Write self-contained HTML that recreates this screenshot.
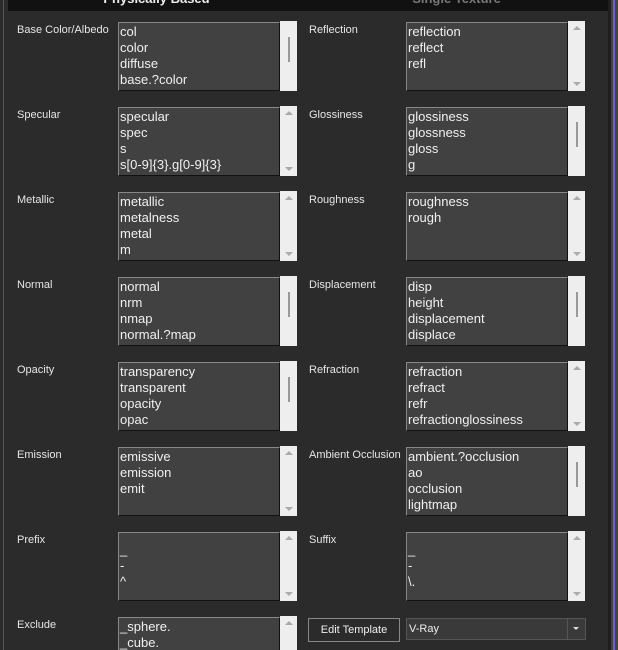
<!DOCTYPE html>
<html style="height:650px;overflow:hidden"><head><style>
html,body{margin:0;width:618px;height:650px;overflow:hidden}
body{background:#2b2b2b;font-family:"Liberation Sans",Arial,sans-serif;position:relative}
.tabs{position:absolute;left:8px;top:0;width:600px;height:11px;background:#111;overflow:hidden}
.tab{position:absolute;top:-9px;font-weight:bold;font-size:13px;color:#eee;width:297px;text-align:center}
.lb{position:absolute;font-size:11px;color:#e6e6e6}
.box{position:absolute;width:162px;height:69px;background:#414141;border:1px solid;border-color:#888 #111 #111 #888;font-size:13px;color:#f0f0f0;line-height:16px;padding:1px 0 0 1px;box-sizing:border-box;white-space:pre;overflow:hidden}
.sb{position:absolute;width:17px;height:70px;background:#eeeeee}
.th{position:absolute;left:8px;top:16px;width:2px;height:25px;background:#999}
.up,.dn{position:absolute;left:5px;width:0;height:0;border-left:4px solid transparent;border-right:4px solid transparent}
.up{top:5px;border-bottom:4px solid #aaa}
.dn{bottom:5px;border-top:4px solid #aaa}
</style></head><body>
<div style="position:absolute;left:3px;top:0;width:1px;height:650px;background:#555"></div>
<div style="position:absolute;left:608px;top:0;width:3px;height:650px;background:#1e1e1e"></div>
<div style="position:absolute;left:611px;top:0;width:7px;height:650px;background:#444"></div>
<div style="position:absolute;left:613px;top:0;width:2px;height:650px;background:#6b64c8"></div>
<div class="tabs"><div class="tab" style="left:0">Physically Based</div><div class="tab" style="left:300px;color:#777">Single Texture</div></div>

<div class="lb" style="left:17px;top:24px">Base Color/Albedo</div>
<div class="box" style="left:118px;top:22px">col
color
diffuse
base.?color</div><div class="sb" style="left:280px;top:21px"><div class="th"></div></div>
<div class="lb" style="left:309px;top:24px">Reflection</div>
<div class="box" style="left:406px;top:22px">reflection
reflect
refl</div><div class="sb" style="left:568px;top:21px"><div class="up"></div><div class="dn"></div></div>

<div class="lb" style="left:17px;top:109px">Specular</div>
<div class="box" style="left:118px;top:107px">specular
spec
s
s[0-9]{3}.g[0-9]{3}</div><div class="sb" style="left:280px;top:106px"><div class="up"></div><div class="dn"></div></div>
<div class="lb" style="left:309px;top:109px">Glossiness</div>
<div class="box" style="left:406px;top:107px">glossiness
glossness
gloss
g</div><div class="sb" style="left:568px;top:106px"><div class="th"></div></div>

<div class="lb" style="left:17px;top:194px">Metallic</div>
<div class="box" style="left:118px;top:192px">metallic
metalness
metal
m</div><div class="sb" style="left:280px;top:191px"><div class="up"></div><div class="dn"></div></div>
<div class="lb" style="left:309px;top:194px">Roughness</div>
<div class="box" style="left:406px;top:192px">roughness
rough</div><div class="sb" style="left:568px;top:191px"><div class="up"></div><div class="dn"></div></div>

<div class="lb" style="left:17px;top:279px">Normal</div>
<div class="box" style="left:118px;top:277px">normal
nrm
nmap
normal.?map</div><div class="sb" style="left:280px;top:276px"><div class="th"></div></div>
<div class="lb" style="left:309px;top:279px">Displacement</div>
<div class="box" style="left:406px;top:277px">disp
height
displacement
displace</div><div class="sb" style="left:568px;top:276px"><div class="th"></div></div>

<div class="lb" style="left:17px;top:364px">Opacity</div>
<div class="box" style="left:118px;top:362px">transparency
transparent
opacity
opac</div><div class="sb" style="left:280px;top:361px"><div class="th"></div></div>
<div class="lb" style="left:309px;top:364px">Refraction</div>
<div class="box" style="left:406px;top:362px">refraction
refract
refr
refractionglossiness</div><div class="sb" style="left:568px;top:361px"><div class="up"></div><div class="dn"></div></div>

<div class="lb" style="left:17px;top:449px">Emission</div>
<div class="box" style="left:118px;top:447px">emissive
emission
emit</div><div class="sb" style="left:280px;top:446px"><div class="up"></div><div class="dn"></div></div>
<div class="lb" style="left:309px;top:449px">Ambient Occlusion</div>
<div class="box" style="left:406px;top:447px">ambient.?occlusion
ao
occlusion
lightmap</div><div class="sb" style="left:568px;top:446px"><div class="th"></div></div>

<div class="lb" style="left:17px;top:534px">Prefix</div>
<div class="box" style="left:118px;top:532px;padding-top:9px">_
-
^</div><div class="sb" style="left:280px;top:531px"><div class="up"></div><div class="dn"></div></div>
<div class="lb" style="left:309px;top:534px">Suffix</div>
<div class="box" style="left:406px;top:532px;padding-top:9px">_
-
\.</div><div class="sb" style="left:568px;top:531px"><div class="up"></div><div class="dn"></div></div>

<div class="lb" style="left:17px;top:619px">Exclude</div>
<div class="box" style="left:118px;top:617px;height:33px;border-bottom:none">_sphere.
_cube.</div><div class="sb" style="left:280px;top:616px;height:34px"><div class="up"></div></div>

<div style="position:absolute;left:308px;top:618px;width:92px;height:24px;border:1px solid #888;box-sizing:border-box;color:#eee;font-size:11px;text-align:center;line-height:23px">Edit Template</div>
<div style="position:absolute;left:406px;top:618px;width:180px;height:22px;border:1px solid #555;background:#3a3a3a;box-sizing:border-box;color:#eee;font-size:11px;line-height:20px;padding-left:2px">V-Ray
<div style="position:absolute;right:0;top:0;width:17px;height:20px;border-left:1px solid #555"><div style="position:absolute;left:5px;top:8px;border-left:3px solid transparent;border-right:3px solid transparent;border-top:3px solid #ddd"></div></div></div>
</body></html>
